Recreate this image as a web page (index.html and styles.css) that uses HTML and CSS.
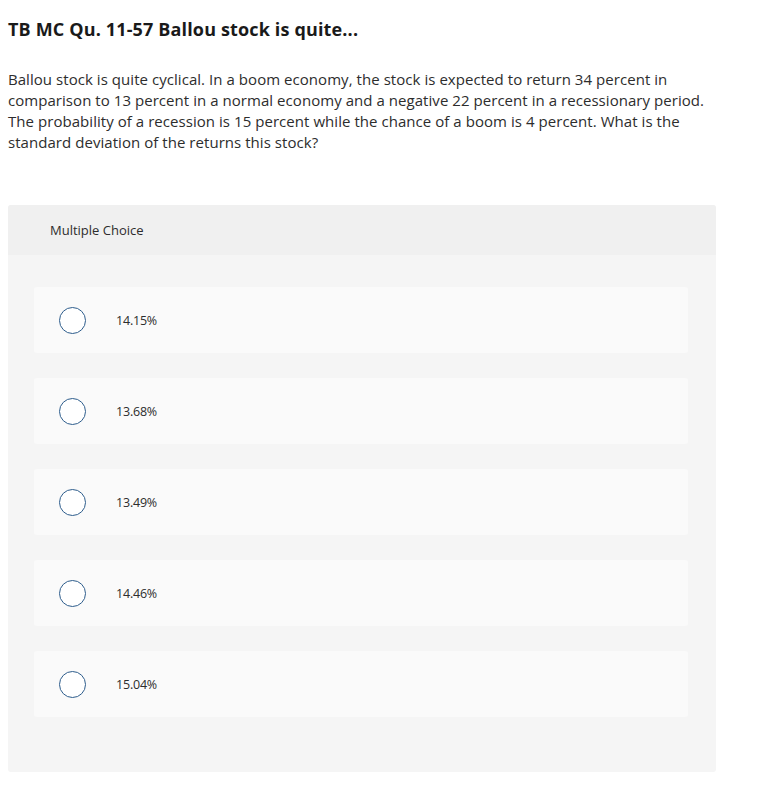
FILE: index.html
```html
<!DOCTYPE html>
<html>
<head>
<meta charset="utf-8">
<link rel="stylesheet" href="styles.css">
</head>
<body>
<h1 class="title">TB MC Qu. 11-57 Ballou stock is quite...</h1>
<p class="question">Ballou stock is quite cyclical. In a boom economy, the stock is expected to return 34 percent in comparison to 13 percent in a normal economy and a negative 22 percent in a recessionary period. The probability of a recession is 15 percent while the chance of a boom is 4 percent. What is the standard deviation of the returns this stock?</p>
<div class="mc">
  <div class="mc-head">Multiple Choice</div>
  <div class="mc-body">
    <div class="option"><span class="radio"></span><span class="label">14.15%</span></div>
    <div class="option"><span class="radio"></span><span class="label">13.68%</span></div>
    <div class="option"><span class="radio"></span><span class="label">13.49%</span></div>
    <div class="option"><span class="radio"></span><span class="label">14.46%</span></div>
    <div class="option"><span class="radio"></span><span class="label">15.04%</span></div>
  </div>
</div>
</body>
</html>
```
FILE: styles.css
```css
body {
  margin: 0;
  padding: 0 8px;
  font-family: "Open Sans", Lato, sans-serif;
  color: #2d2d2d;
  background: #fff;
}
.title {
  margin: 0;
  padding-top: 17px;
  font-size: 18px;
  line-height: 24px;
  letter-spacing: 0.15px;
  font-weight: 700;
  color: #1a1a1a;
}
.question {
  margin: 0;
  padding-top: 28px;
  width: 700px;
  font-size: 15px;
  line-height: 21px;
  letter-spacing: 0.05px;
  color: #2d2d2d;
}
.mc {
  margin-top: 52px;
  width: 708px;
  background: #f5f5f5;
  border-radius: 3px;
  overflow: hidden;
}
.mc-head {
  height: 50px;
  background: #f0f0f0;
  display: flex;
  align-items: center;
  padding-left: 42px;
  font-size: 13px;
  color: #2d2d2d;
}
.mc-body {
  padding: 32px 28px 55px 26px;
  display: flex;
  flex-direction: column;
  gap: 25px;
}
.option {
  height: 66px;
  background: #fafafa;
  border-radius: 3px;
  display: flex;
  align-items: center;
  padding-left: 25px;
}
.radio {
  width: 25px;
  height: 25px;
  border: 1.5px solid #2e5d8c;
  border-radius: 50%;
  background: #fff;
  flex: none;
}
.label {
  margin-left: 30px;
  font-size: 12.5px;
  letter-spacing: -0.2px;
  color: #2d2d2d;
}
```
